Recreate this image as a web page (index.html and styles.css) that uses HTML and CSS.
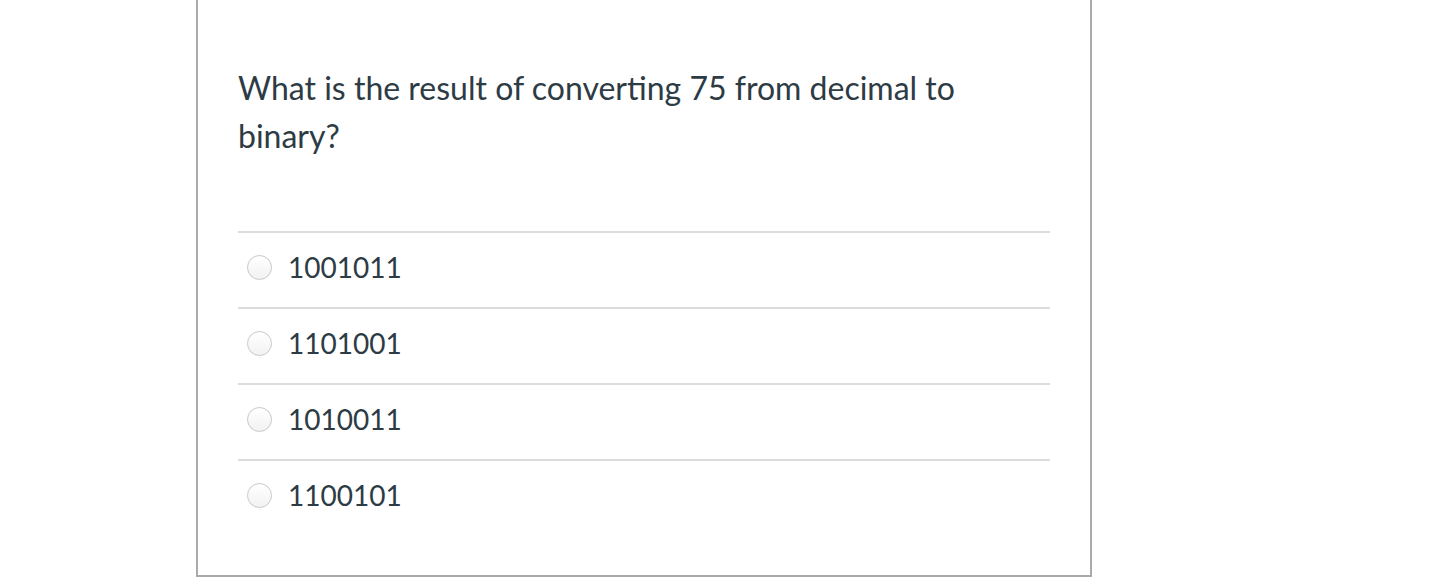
FILE: index.html
```html
<!DOCTYPE html>
<html lang="en">
<head>
<meta charset="utf-8">
<title>Quiz question</title>
<link rel="stylesheet" href="styles.css">
</head>
<body>
<div class="page">
  <div class="question">
    <div class="question-text">What is the result of converting 75 from decimal to binary?</div>
    <div class="answers">
      <label class="answer"><span class="radio"></span><span class="answer-text">1001011</span></label>
      <label class="answer"><span class="radio"></span><span class="answer-text">1101001</span></label>
      <label class="answer"><span class="radio"></span><span class="answer-text">1010011</span></label>
      <label class="answer"><span class="radio"></span><span class="answer-text">1100101</span></label>
    </div>
  </div>
</div>
</body>
</html>
```
FILE: styles.css
```css
html, body {
  margin: 0;
  padding: 0;
  background: #ffffff;
}

body {
  font-family: "Lato", "Liberation Sans", sans-serif;
  color: #2d3b45;
}

.page {
  padding-left: 196px;
}

.question {
  width: 812px;
  border: 2px solid #aaaaaa;
  border-top: none;
  padding: 64px 40px 40px 40px;
}

.question-text {
  font-size: 32px;
  line-height: 48px;
  width: 740px;
  margin-bottom: 71px;
}

.answers {
  display: flex;
  flex-direction: column;
}

.answer {
  display: flex;
  align-items: center;
  height: 74px;
  border-top: 2px solid #dddddd;
  box-sizing: content-box;
}

.answer .radio {
  width: 23px;
  height: 23px;
  border: 1px solid #c8c8c8;
  border-radius: 50%;
  background: linear-gradient(#ffffff, #f2f2f2);
  margin-left: 9px;
  margin-right: 16px;
  margin-top: -5px;
  flex: none;
}

.answer-text {
  font-size: 28px;
  line-height: 30px;
  margin-top: -6px;
}
```
